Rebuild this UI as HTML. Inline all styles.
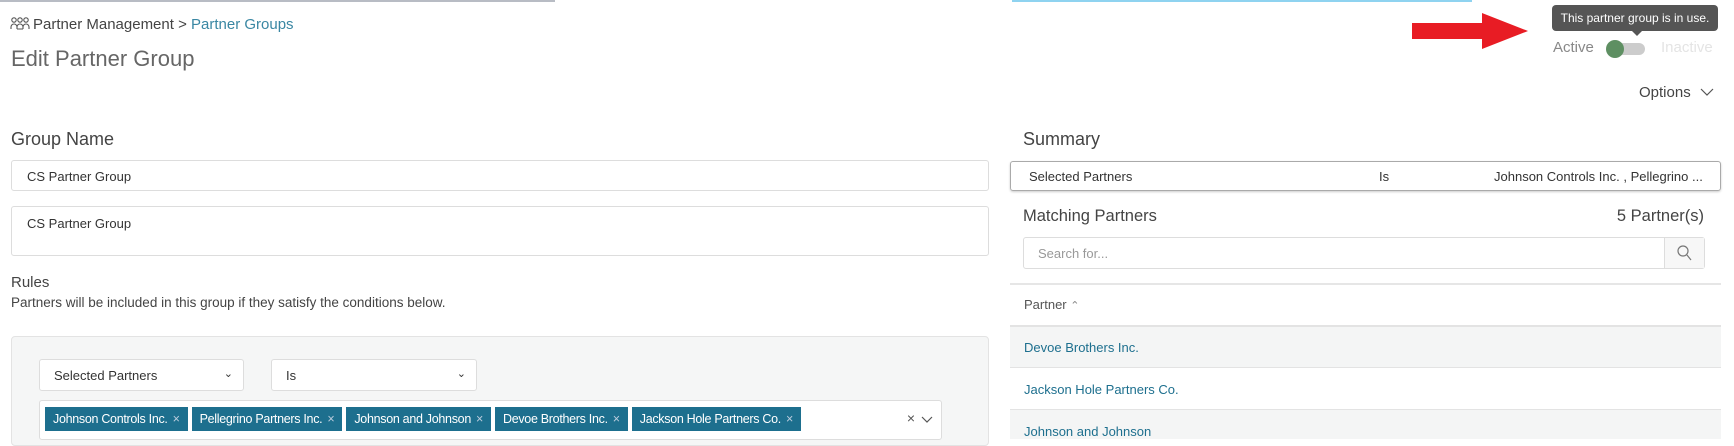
<!DOCTYPE html>
<html><head><style>
*{box-sizing:border-box;margin:0;padding:0}
body{width:1734px;height:435px;overflow:hidden;background:#fff;font-family:"Liberation Sans",sans-serif;color:#444;position:relative}
.a{position:absolute;white-space:nowrap}
.inp{position:absolute;border:1px solid #ddd;border-radius:3px;background:#fff;font-size:13px;color:#333}
.tag{display:inline-block;background:#1d6f8e;color:#fff;font-size:12.5px;padding:0 8px;height:24px;line-height:24px;margin-right:4px;letter-spacing:-.3px}
.tag span{color:#bcd;margin-left:5px}
.lnk{color:#1d6f8e}
</style></head><body>
<div class="a" style="left:0;top:0;width:555px;height:2px;background:#b8bcc4"></div>
<div class="a" style="left:1012px;top:0;width:460px;height:2px;background:#8fd3f0"></div>
<svg class="a" style="left:10px;top:16px" width="20" height="14" viewBox="0 0 20 14" fill="none" stroke="#555" stroke-width="1.1"><circle cx="4" cy="4" r="2.2"/><circle cx="10" cy="4" r="2.2"/><circle cx="16" cy="4" r="2.2"/><path d="M1 13v-2a3 3 0 0 1 6 0M7 13v-2a3 3 0 0 1 6 0v2M13 11a3 3 0 0 1 6 0v2M7 13h6"/></svg>
<div class="a" style="left:33px;top:16px;font-size:15px;color:#444">Partner Management &gt; <span class="lnk" style="color:#3a87a3">Partner Groups</span></div>
<div class="a" style="left:11px;top:46px;font-size:22px;color:#666">Edit Partner Group</div>
<div class="a" style="left:1552px;top:5px;width:166px;height:26px;background:#555;border-radius:4px;color:#fff;font-size:12px;line-height:26px;text-align:center">This partner group is in use.</div>
<div class="a" style="left:1632px;top:31px;width:0;height:0;border:5px solid transparent;border-top-color:#555"></div>
<svg class="a" style="left:1412px;top:12px" width="116" height="38"><polygon points="0,11 70,11 70,1 116,19 70,37 70,27 0,27" fill="#e81c24"/></svg>
<div class="a" style="left:1553px;top:39px;font-size:15px;color:#888">Active</div>
<div class="a" style="left:1611px;top:43px;width:34px;height:12px;border-radius:6px;background:#ccc"></div>
<div class="a" style="left:1606px;top:40px;width:18px;height:18px;border-radius:50%;background:#5e8f62"></div>
<div class="a" style="left:1661px;top:39px;font-size:15px;color:#e4e4e4">Inactive</div>
<div class="a" style="left:1639px;top:84px;font-size:15px;color:#444">Options</div>
<svg class="a" style="left:1700px;top:88px" width="14" height="9"><path d="M1 1l6 6 6-6" fill="none" stroke="#555" stroke-width="1.2"/></svg>

<div class="a" style="left:11px;top:129px;font-size:18px;color:#444">Group Name</div>
<div class="inp" style="left:11px;top:160px;width:978px;height:31px;padding:8px 15px">CS Partner Group</div>
<div class="inp" style="left:11px;top:206px;width:978px;height:50px;padding:9px 15px">CS Partner Group</div>
<div class="a" style="left:11px;top:274px;font-size:15px;color:#444">Rules</div>
<div class="a" style="left:11px;top:295px;font-size:13.5px;color:#444">Partners will be included in this group if they satisfy the conditions below.</div>
<div class="a" style="left:11px;top:336px;width:978px;height:110px;background:#f5f6f6;border:1px solid #e3e3e3;border-radius:4px"></div>
<div class="inp" style="left:39px;top:359px;width:205px;height:32px;padding:8px 14px">Selected Partners<span style="position:absolute;right:10px;top:7px;font-size:11px">&#8964;</span></div>
<div class="inp" style="left:271px;top:359px;width:206px;height:32px;padding:8px 14px">Is<span style="position:absolute;right:10px;top:7px;font-size:11px">&#8964;</span></div>
<div class="inp" style="left:39px;top:400px;width:903px;height:40px;padding:6px 5px">
<span class="tag">Johnson Controls Inc.<span>×</span></span><span class="tag">Pellegrino Partners Inc.<span>×</span></span><span class="tag">Johnson and Johnson<span>×</span></span><span class="tag">Devoe Brothers Inc.<span>×</span></span><span class="tag">Jackson Hole Partners Co.<span>×</span></span>
<span style="position:absolute;right:26px;top:9px;font-size:14px;color:#555">×</span>
<svg style="position:absolute;right:8px;top:15px" width="12" height="8"><path d="M1 1l5 5 5-5" fill="none" stroke="#555" stroke-width="1.2"/></svg></div>

<div class="a" style="left:1023px;top:129px;font-size:18px;color:#444">Summary</div>
<div class="a" style="left:1010px;top:161px;width:711px;height:30px;border:1px solid #aaa;border-radius:3px;box-shadow:0 1px 2px #ccc;font-size:13px;color:#333">
<span class="a" style="left:18px;top:7px">Selected Partners</span><span class="a" style="left:368px;top:7px">Is</span><span class="a" style="left:483px;top:7px">Johnson Controls Inc. , Pellegrino ...</span></div>
<div class="a" style="left:1023px;top:207px;font-size:16.5px;color:#444">Matching Partners</div>
<div class="a" style="right:30px;top:207px;font-size:16.5px;color:#444">5 Partner(s)</div>
<div class="inp" style="left:1023px;top:237px;width:682px;height:32px;padding:8px 14px;color:#999">Search for...</div>
<div class="a" style="left:1664px;top:238px;width:40px;height:30px;background:#f7f7f7;border-left:1px solid #ddd"></div>
<svg class="a" style="left:1677px;top:245px" width="15" height="16"><circle cx="6" cy="6" r="5" fill="none" stroke="#777" stroke-width="1.2"/><path d="M10 10l4 5" stroke="#777" stroke-width="1.2"/></svg>
<div class="a" style="left:1010px;top:283px;width:711px;height:2px;background:#e6e6e6"></div>
<div class="a" style="left:1024px;top:297px;font-size:13px;color:#555">Partner <span style="font-size:11px;color:#888">&#8963;</span></div>
<div class="a" style="left:1010px;top:325px;width:711px;height:43px;background:#f4f5f5;border-top:2px solid #e3e3e3;border-bottom:1px solid #e3e3e3"></div>
<div class="a lnk" style="left:1024px;top:340px;font-size:13px">Devoe Brothers Inc.</div>
<div class="a lnk" style="left:1024px;top:382px;font-size:13px">Jackson Hole Partners Co.</div>
<div class="a" style="left:1010px;top:409px;width:711px;height:30px;background:#f4f5f5;border-top:1px solid #e3e3e3"></div>
<div class="a lnk" style="left:1024px;top:424px;font-size:13px">Johnson and Johnson</div>
</body></html>
